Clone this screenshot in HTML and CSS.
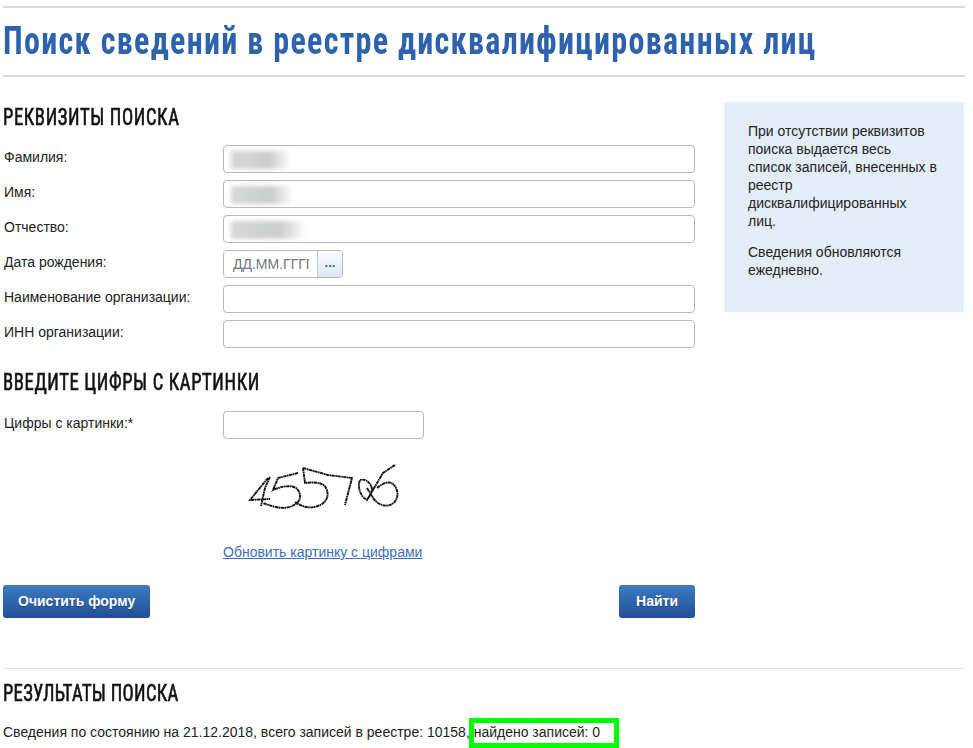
FILE: index.html
```html
<!DOCTYPE html>
<html lang="ru">
<head>
<meta charset="utf-8">
<title>Поиск сведений в реестре дисквалифицированных лиц</title>
<link rel="stylesheet" href="styles.css">
</head>
<body>
<div class="page">
  <header class="title-bar"><h1>Поиск сведений в реестре дисквалифицированных лиц</h1></header>
  <div class="columns">
    <main class="form">
      <h2 class="first">Реквизиты поиска</h2>
      <div class="rows">
        <div class="row"><label>Фамилия:</label><div class="field"><input class="input" type="text"><span class="smudge s1"></span></div></div>
        <div class="row"><label>Имя:</label><div class="field"><input class="input" type="text"><span class="smudge s2"></span></div></div>
        <div class="row"><label>Отчество:</label><div class="field"><input class="input" type="text"><span class="smudge s3"></span></div></div>
        <div class="row"><label>Дата рождения:</label>
          <div class="date"><input class="date-input" type="text" placeholder="ДД.ММ.ГГГГ"><button class="date-btn" type="button">...</button></div>
        </div>
        <div class="row"><label>Наименование организации:</label><div class="field"><input class="input" type="text"></div></div>
        <div class="row"><label>ИНН организации:</label><div class="field"><input class="input" type="text"></div></div>
      </div>
      <h2 class="second">Введите цифры с картинки</h2>
      <div class="row"><label>Цифры с картинки:*</label><div class="field short"><input class="input" type="text"></div></div>
      <div class="captcha-block">
        <svg class="captcha" width="160" height="60" viewBox="0 0 160 60" fill="none" stroke="#111" stroke-width="1.9" stroke-dasharray="3.4 .5 1.6 .4">
          <path d="M20 18 L2 40 L22 39 M22 17 L17 28 L13 46"/>
          <path d="M50 13 L30 18 L25 30 C34 26 46 24 50 30 C54 36 52 42 46 45 C38 50 28 48 15 43"/>
          <path d="M55 8 L57 23 C66 22 75 22 78 28 C82 36 78 43 70 46 C62 49 54 47 47 42"/>
          <path d="M55 8 L80 15 L104 18 L97 45"/>
          <path d="M147 5 L135 13 L119 40 C113 37 109 28 112 20 C118 18 124 24 124 30 C123 36 119 39 119 40"/>
          <path d="M129 28 C135 23 142 20 146 25 C152 32 150 42 142 45 C136 47 128 44 124 36 L119 28"/>
        </svg>
        <a class="refresh" href="#">Обновить картинку с цифрами</a>
      </div>
      <div class="actions">
        <button class="btn" type="button">Очистить форму</button>
        <button class="btn" type="button">Найти</button>
      </div>
    </main>
    <aside class="info">
      <p>При отсутствии реквизитов<br>поиска выдается весь<br>список записей, внесенных в<br>реестр<br>дисквалифицированных<br>лиц.</p>
      <p>Сведения обновляются<br>ежедневно.</p>
    </aside>
  </div>
  <section class="results">
    <h2 class="third">Результаты поиска</h2>
    <p class="summary">Сведения по состоянию на 21.12.2018, всего записей в реестре: 10158, <span class="mark">найдено записей: 0</span></p>
  </section>
</div>
</body>
</html>
```
FILE: styles.css
```css
html, body { margin: 0; padding: 0; background: #fff; }
body { font-family: "Liberation Sans", Arial, sans-serif; font-size: 14px; color: #222; overflow: hidden; height: 748px; }
.page { padding: 6px 8px 0 3px; }
.title-bar { border-top: 2px solid #d6dbe1; border-bottom: 2px solid #d6dbe1; height: 67px; display: flex; align-items: center; }
h1 { margin: -2px 0 0; font-family: "Liberation Sans Narrow", "Roboto Condensed", "DejaVu Sans Condensed", sans-serif; font-weight: 700; font-size: 38px; letter-spacing: 1.55px; color: #2f62ae; white-space: nowrap; transform: scaleX(.843); transform-origin: left center; }
h2 { margin: 0; font-family: "Liberation Sans Narrow", "Roboto Condensed", "DejaVu Sans Condensed", sans-serif; font-weight: 400; font-size: 23px; line-height: 28px; letter-spacing: .75px; color: #111; text-transform: uppercase; -webkit-text-stroke: .6px #111; white-space: nowrap; transform: scaleX(.81); transform-origin: left center; }
.columns { display: flex; gap: 29px; align-items: flex-start; }
.form { width: 692px; }
h2.first { margin-top: 27px; margin-bottom: 13px; }
h2.second { margin-top: 21px; margin-bottom: 14px; }
h2.third { margin-top: 11px; letter-spacing: .34px; }
.rows { display: flex; flex-direction: column; gap: 7px; }
.row { display: flex; height: 28px; }
.row label { width: 220px; flex: none; padding-left: 1px; line-height: 24px; box-sizing: border-box; }
.field { position: relative; flex: 1; height: 28px; }
.field.short { flex: none; width: 201px; }
.input { width: 100%; height: 28px; box-sizing: border-box; border: 1px solid #b8b8b8; border-radius: 4px; background: #fff; margin: 0; padding: 0 8px; display: block; }
.smudge { position: absolute; top: 6px; height: 18px; left: 8px; background: linear-gradient(90deg, #d6d7d8, #cbcccc 65%, #fff); filter: blur(2px); }
.s1 { width: 60px; }
.s2 { width: 63px; }
.s3 { width: 75px; }
.date { display: flex; height: 28px; width: 120px; box-sizing: border-box; border: 1px solid #b8b8b8; border-radius: 4px; overflow: hidden; }
.date-input { width: 93px; border: 0; padding: 0 8px 0 9px; margin: 0; box-sizing: border-box; font: 14px "Liberation Sans", Arial, sans-serif; background: #fff; color: #555; outline: 0; }
.date-input::placeholder { color: #71787f; opacity: 1; }
.date-btn { flex: 1; border: 0; border-left: 1px solid #c4c9d0; margin: 0; padding: 0 0 4px; background: linear-gradient(#fbfcfe, #dce7f6); color: #2f62ae; font: bold 13px "Liberation Sans", Arial, sans-serif; }
.captcha-block { display: flex; flex-direction: column; padding-left: 220px; }
.captcha { display: block; margin: 21px 0 0 25px; }
.refresh { margin-top: 23px; color: #3a70b9; font-size: 14px; line-height: 18px; text-decoration: underline; }
.actions { display: flex; justify-content: space-between; margin-top: 24px; }
.btn { height: 33px; padding: 0 15px 2px; border: 0; border-radius: 3px; background: linear-gradient(#3c7cc2, #234e97); color: #fff; font: bold 14px "Liberation Sans", Arial, sans-serif; text-shadow: 0 1px 1px rgba(0,0,0,.3); }
.btn + .btn { padding: 0 17px 2px; }
.info { width: 240px; height: 210px; margin-top: 25px; padding: 20px 24px 0; box-sizing: border-box; background: #e4eefa; line-height: 18px; color: #222; }
.info p { margin: 0 0 13px; }
.results { margin-top: 50px; border-top: 1px solid #e4e4e4; }
.summary { margin: 14px 0 0; line-height: 20px; white-space: nowrap; }
.mark { position: relative; }
.mark::after { content: ""; position: absolute; left: -5px; top: -6px; width: 140px; height: 20px; border: 5px solid #00ff00; }
```
